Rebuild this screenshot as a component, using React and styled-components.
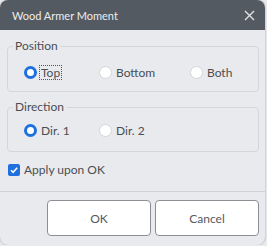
import React from "react";
import styled, { createGlobalStyle } from "styled-components";

const Global = createGlobalStyle`
  html, body { margin: 0; padding: 0; background: #e9eaed; }
  body { font-family: Lato, "Noto Sans", Arial, sans-serif; }
  * { box-sizing: border-box; }
`;

const Dialog = styled.div`
  width: 265px;
  height: 245px;
  background: #e9eaed;
  border-radius: 8px;
  box-shadow: 0 0 2px rgba(0, 0, 0, 0.35);
  display: flex;
  flex-direction: column;
  overflow: hidden;
`;

const TitleBar = styled.div`
  height: 30px;
  flex: none;
  background: #545a61;
  display: flex;
  align-items: center;
  justify-content: space-between;
  padding: 0 9px 0 12px;
`;

const Title = styled.span`
  color: #eceded;
  font-size: 11px;
`;

const CloseButton = styled.button`
  border: 0;
  background: none;
  padding: 0;
  width: 13px;
  height: 13px;
  display: flex;
  align-items: center;
  justify-content: center;
`;

const Content = styled.div`
  padding: 8px 6px 0 7px;
  display: flex;
  flex-direction: column;
  gap: 7px;
`;

const Group = styled.fieldset`
  margin: 0;
  border: 1px solid #d4d6da;
  border-radius: 4px;
  padding: ${(p) => p.$pad};
  min-width: 0;
`;

const Legend = styled.legend`
  margin-left: -11px;
  padding: 0 2px;
  font-size: 12px;
  line-height: 16px;
  color: #4a4e53;
`;

const RadioRow = styled.div`
  display: grid;
  grid-template-columns: 75px 91px auto;
  align-items: center;
  height: 16px;
`;

const Option = styled.label`
  display: flex;
  align-items: center;
  gap: 2px;
  font-size: 12px;
  color: #4a4e53;
`;

const RadioDot = styled.span`
  width: 13px;
  height: 13px;
  border-radius: 50%;
  flex: none;
  background: #fff;
  border: ${(p) => (p.$on ? "3.5px solid #1e6fe0" : "1px solid #d3d5d8")};
`;

const OptionText = styled.span`
  padding: 0 1px;
  line-height: 13px;
  border: 1px ${(p) => (p.$focus ? "dotted #555" : "solid transparent")};
`;

const CheckRow = styled.label`
  display: flex;
  align-items: center;
  gap: 4px;
  margin-top: 3px;
  margin-left: 1px;
  font-size: 12px;
  color: #4a4e53;
`;

const CheckBox = styled.span`
  width: 12px;
  height: 12px;
  border-radius: 2px;
  background: #1e6fe0;
  display: flex;
  align-items: center;
  justify-content: center;
`;

const Separator = styled.div`
  height: 1px;
  background: #cfd1d5;
  margin-top: 14px;
`;

const Footer = styled.div`
  display: flex;
  justify-content: flex-end;
  gap: 4px;
  padding: 8px 6px 0 0;
`;

const Button = styled.button`
  width: 104px;
  height: 36px;
  border: 1px solid #8b8e93;
  border-radius: 4px;
  background: #fff;
  font-family: inherit;
  font-size: 12px;
  color: #55595e;
`;

function Radio({ on, focus, children }) {
  return (
    <Option>
      <RadioDot $on={on} />
      <OptionText $focus={focus}>{children}</OptionText>
    </Option>
  );
}

export default function App() {
  return (
    <>
      <Global />
      <Dialog>
        <TitleBar>
          <Title>Wood Armer Moment</Title>
          <CloseButton aria-label="close">
            <svg width="11" height="11" viewBox="0 0 11 11">
              <path d="M1 1L10 10M10 1L1 10" stroke="#e2e3e4" strokeWidth="1.4" />
            </svg>
          </CloseButton>
        </TitleBar>
        <Content>
          <Group $pad="10px 0 11px 16px">
            <Legend>Position</Legend>
            <RadioRow>
              <Radio on focus>Top</Radio>
              <Radio>Bottom</Radio>
              <Radio>Both</Radio>
            </RadioRow>
          </Group>
          <Group $pad="7px 0 13px 16px">
            <Legend>Direction</Legend>
            <RadioRow>
              <Radio on>Dir. 1</Radio>
              <Radio>Dir. 2</Radio>
            </RadioRow>
          </Group>
          <CheckRow>
            <CheckBox>
              <svg width="10" height="10" viewBox="0 0 10 10">
                <path d="M2 5.2L4.1 7.3L8.2 2.8" stroke="#fff" strokeWidth="1.6" fill="none" />
              </svg>
            </CheckBox>
            Apply upon OK
          </CheckRow>
        </Content>
        <Separator />
        <Footer>
          <Button>OK</Button>
          <Button>Cancel</Button>
        </Footer>
      </Dialog>
    </>
  );
}
